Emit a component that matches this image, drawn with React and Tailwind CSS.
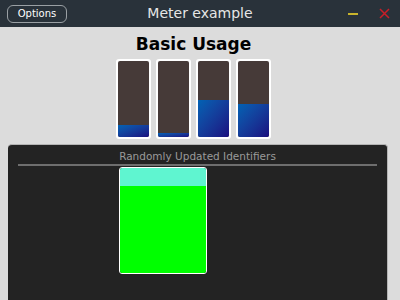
const meters = [12, 4, 37, 33];

function Meter({ fill }) {
  return (
    <div className="w-[35px] h-[80px] rounded-[3px] bg-white p-[2px]">
      <div className="flex h-full flex-col justify-end overflow-hidden rounded-[2px] bg-[#463a38]">
        <div
          className="bg-gradient-to-br from-[#0062b4] to-[#1a0c80]"
          style={{ height: fill }}
        />
      </div>
    </div>
  );
}

export default function App() {
  return (
    <div className="flex h-[300px] w-[400px] flex-col overflow-hidden bg-[#dcdcdc] font-['DejaVu_Sans',sans-serif]">
      {/* title bar */}
      <div className="relative flex h-[27px] shrink-0 items-center bg-[#29323a]">
        <button className="ml-[7px] flex h-[18px] w-[60px] items-center justify-center rounded-[6px] border border-[#9aa0a4] text-[10px] text-white">
          Options
        </button>
        <div className="absolute left-0 right-0 top-0 flex h-[27px] items-center justify-center text-[14px] text-[#e6e6e6] pointer-events-none">
          Meter example
        </div>
        <div className="ml-auto mr-[10px] flex items-center gap-[21px]">
          <div className="h-[2px] w-[10px] bg-[#c8b42c]" />
          <svg width="11" height="11" viewBox="0 0 11 11">
            <path d="M1 1L10 10M10 1L1 10" stroke="#c81e28" strokeWidth="1.5" />
          </svg>
        </div>
      </div>

      {/* basic usage */}
      <div className="flex flex-col items-center pr-[13px]">
        <div className="mt-[5px] h-[25px] text-[17px] font-bold leading-[25px] text-black">
          Basic Usage
        </div>
        <div className="mt-[2px] flex gap-[5px]">
          {meters.map((m, i) => (
            <Meter key={i} fill={m} />
          ))}
        </div>
      </div>

      {/* panel */}
      <div className="ml-[8px] mr-[12px] mt-[5px] flex flex-1 flex-col rounded-t-[4px] border-r border-t border-[#b4b4b4] bg-[#232323]">
        <div className="mt-[5px] text-center text-[10.5px] leading-[13px] text-[#9a9a9a]">
          Randomly Updated Identifiers
        </div>
        <div className="mx-[10px] mt-[1px] h-[2px] bg-[#6e6e6e]" />
        <div className="ml-[111px] mt-[1px] flex h-[107px] w-[88px] flex-col overflow-hidden rounded-[3px] border border-white">
          <div className="h-[18px] bg-[#5ff5d0]" />
          <div className="flex-1 bg-[#00ff00]" />
        </div>
      </div>
    </div>
  );
}
